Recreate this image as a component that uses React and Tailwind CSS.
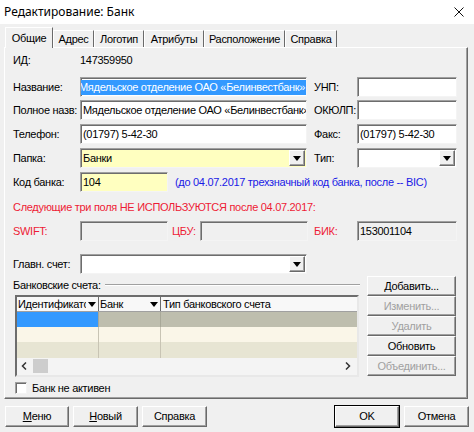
import React from 'react';

const sunken =
  'border border-t-[#a0a0a0] border-l-[#a0a0a0] border-r-[#f4f4f4] border-b-[#f4f4f4] shadow-[inset_1px_1px_0_#6d6d6d]';
const raised =
  'border border-t-white border-l-white border-r-[#6a6a6a] border-b-[#6a6a6a] shadow-[inset_-1px_-1px_0_#a0a0a0] bg-[#f0f0f0]';

const Field = ({ w, bg = 'bg-white', children, className = '' }) => (
  <div className={`${w} h-[20px] ${bg} ${sunken} flex items-center overflow-hidden whitespace-nowrap pl-[2px] ${className}`}>
    {children}
  </div>
);

const Arrow = () => (
  <svg width="8" height="5" viewBox="0 0 8 5">
    <path d="M0 0h8L4 5z" fill="#000" />
  </svg>
);

const Combo = ({ w, bg = 'bg-white', children }) => (
  <div className={`${w} h-[20px] ${bg} ${sunken} flex items-center overflow-hidden whitespace-nowrap pl-[2px] pr-[1px]`}>
    <span className="flex-1">{children}</span>
    <div className={`w-[16px] h-[16px] ${raised} flex items-center justify-center`}>
      <Arrow />
    </div>
  </div>
);

const Btn = ({ w = 'w-[89px]', children, disabled, def, className = '' }) => (
  <div
    className={`${w} h-[20px] ${raised} flex items-center justify-center whitespace-nowrap ${
      disabled ? 'text-[#a0a0a0]' : 'text-black'
    } ${def ? 'outline outline-1 outline-black' : ''} ${className}`}
  >
    {children}
  </div>
);

const Tab = ({ w, active, children }) => (
  <div
    className={`${w} flex items-center justify-center whitespace-nowrap border-l border-t border-l-white border-t-white border-r border-r-[#6a6a6a] ${
      active ? 'h-[21px] relative z-10 bg-[#f0f0f0] -mb-[1px]' : 'h-[17px]'
    }`}
  >
    {children}
  </div>
);

const Label = ({ w = 'w-[67px]', className = '', children }) => (
  <span className={`${w} shrink-0 whitespace-nowrap ${className}`}>{children}</span>
);

export default function App() {
  return (
    <div
      className="w-[474px] h-[432px] bg-[#f0f0f0] overflow-hidden text-[11px] tracking-[-0.3px] text-black leading-none"
      style={{ fontFamily: '"Liberation Sans", Arial, sans-serif' }}
    >
      {/* title bar */}
      <div className="h-[24px] bg-white flex items-center justify-between pl-[4px] pr-[10px] tracking-normal">
        <span className="text-[12px]" style={{ fontFamily: '"Noto Sans", "Open Sans", sans-serif' }}>
          Редактирование: Банк
        </span>
        <svg width="10" height="10" viewBox="0 0 10 10">
          <path d="M0.5 0.5L9.5 9.5M9.5 0.5L0.5 9.5" stroke="#111" strokeWidth="1" />
        </svg>
      </div>

      {/* tabs */}
      <div className="flex items-end pl-[5px] mt-[3px] h-[20px]">
        <Tab w="w-[48px]" active>Общие</Tab>
        <Tab w="w-[41px]">Адрес</Tab>
        <Tab w="w-[50px]">Логотип</Tab>
        <Tab w="w-[60px]">Атрибуты</Tab>
        <Tab w="w-[81px]">Расположение</Tab>
        <Tab w="w-[52px]">Справка</Tab>
      </div>

      {/* panel */}
      <div className="ml-[4px] w-[464px] h-[352px] border border-t-white border-l-white border-r-[#6a6a6a] border-b-[#6a6a6a] shadow-[inset_-1px_-1px_0_#a0a0a0] pl-[8px] flex flex-col">
        <div className="flex items-center h-[20px] mt-[2px]">
          <Label>ИД:</Label>
          <span>147359950</span>
        </div>

        <div className="flex items-center h-[20px] mt-[7px]">
          <Label>Название:</Label>
          <Field w="w-[227px]" className="!pl-[1px]">
            <span className="bg-[#3399ff] text-white h-[15px] flex items-center pr-[4px] -ml-[3px]">
              Мядельское отделение ОАО «Белинвестбанк»
            </span>
          </Field>
          <Label w="w-[43px]" className="ml-[7px]">УНП:</Label>
          <Field w="w-[100px]" />
        </div>

        <div className="flex items-center h-[20px] mt-[3px]">
          <Label>Полное назв:</Label>
          <Field w="w-[227px]">Мядельское отделение ОАО «Белинвестбанк»</Field>
          <Label w="w-[43px]" className="ml-[7px]">ОКЮЛП:</Label>
          <Field w="w-[100px]" />
        </div>

        <div className="flex items-center h-[20px] mt-[4px]">
          <Label>Телефон:</Label>
          <Field w="w-[227px]">(01797) 5-42-30</Field>
          <Label w="w-[43px]" className="ml-[7px]">Факс:</Label>
          <Field w="w-[100px]">(01797) 5-42-30</Field>
        </div>

        <div className="flex items-center h-[20px] mt-[4px]">
          <Label>Папка:</Label>
          <Combo w="w-[227px]" bg="bg-[#ffffc0]">Банки</Combo>
          <Label w="w-[43px]" className="ml-[7px]">Тип:</Label>
          <Combo w="w-[100px]" />
        </div>

        <div className="flex items-center h-[20px] mt-[4px]">
          <Label>Код банка:</Label>
          <Field w="w-[88px]" bg="bg-[#ffffc0]">104</Field>
          <span className="ml-[7px] text-[#1a1ae6] whitespace-nowrap">
            (до 04.07.2017 трехзначный код банка, после -- BIC)
          </span>
        </div>

        <div className="flex items-center h-[18px] mt-[6px] text-[#ee1b35] whitespace-nowrap">
          Следующие три поля НЕ ИСПОЛЬЗУЮТСЯ после 04.07.2017:
        </div>

        <div className="flex items-center h-[20px] mt-[5px]">
          <Label className="text-[#ee1b35]">SWIFT:</Label>
          <Field w="w-[88px]" bg="bg-[#f0f0f0]" />
          <Label w="w-[28px]" className="ml-[4px] text-[#ee1b35]">ЦБУ:</Label>
          <Field w="w-[108px]" bg="bg-[#f0f0f0]" />
          <Label w="w-[43px]" className="ml-[6px] text-[#ee1b35]">БИК:</Label>
          <Field w="w-[100px]" bg="bg-[#f0f0f0]">153001104</Field>
        </div>

        <div className="flex items-center h-[20px] mt-[13px]">
          <Label>Главн. счет:</Label>
          <Combo w="w-[227px]" />
        </div>

        {/* accounts group */}
        <div className="flex mt-[2px]">
          <div className="w-[346px] flex flex-col">
            <div className="flex items-center h-[14px] mt-[2px]">
              <span className="shrink-0 pr-[4px]">Банковские счета:</span>
              <div className="flex-1 border-t border-t-[#a0a0a0] border-b border-b-white mr-[-1px]" />
            </div>
            <div className="ml-[2px] mt-[3px] w-[344px] h-[82px] border-2 border-t-[#6d6d6d] border-l-[#6d6d6d] border-r-[#e8e8e8] border-b-[#e8e8e8] bg-[#f4f4f4] flex flex-col">
              <div className="flex h-[15px] bg-[#f8f8f8] border-b border-b-[#a0a0a0]">
                <div className="w-[82px] flex items-center pl-[1px] border-r border-r-[#6d6d6d] overflow-hidden whitespace-nowrap">
                  <span className="flex-1 overflow-hidden">Идентификатор</span>
                  <span className="px-[2px]"><Arrow /></span>
                </div>
                <div className="w-[62px] flex items-center pl-[1px] border-r border-r-[#6d6d6d]">
                  <span className="flex-1">Банк</span>
                  <span className="px-[2px]"><Arrow /></span>
                </div>
                <div className="flex-1 flex items-center pl-[2px] whitespace-nowrap">Тип банковского счета</div>
              </div>
              <div className="flex h-[15px] bg-[#bebeae]">
                <div className="w-[82px] bg-[#3399ff] border-r border-r-[#a8a898]" />
                <div className="w-[62px] border-r border-r-[#a8a898]" />
              </div>
              <div className="flex h-[15px] bg-[#faf6e8]">
                <div className="w-[82px] border-r border-r-[#c8c4b4]" />
                <div className="w-[62px] border-r border-r-[#c8c4b4]" />
              </div>
              <div className="flex h-[16px] bg-[#e7e5d3]">
                <div className="w-[82px] border-r border-r-[#c8c4b4]" />
                <div className="w-[62px] border-r border-r-[#c8c4b4]" />
              </div>
              <div className="flex items-center h-[16px] bg-[#f4f4f4] pl-[4px] pr-[6px]">
                <svg width="6" height="8" viewBox="0 0 6 8"><path d="M5 0.5L1.5 4L5 7.5" stroke="#333" strokeWidth="1.5" fill="none" /></svg>
                <div className="ml-[6px] w-[15px] h-[14px] bg-[#cdcdcd]" />
                <div className="flex-1" />
                <svg width="6" height="8" viewBox="0 0 6 8"><path d="M1 0.5L4.5 4L1 7.5" stroke="#333" strokeWidth="1.5" fill="none" /></svg>
              </div>
            </div>
          </div>
          <div className="ml-[8px] flex flex-col">
            <Btn>Добавить...</Btn>
            <Btn disabled>Изменить...</Btn>
            <Btn disabled>Удалить</Btn>
            <Btn>Обновить</Btn>
            <Btn disabled>Объединить...</Btn>
          </div>
        </div>

        <div className="flex items-center h-[14px] mt-[4px] ml-[2px]">
          <div className={`w-[12px] h-[12px] bg-white ${sunken}`} />
          <span className="ml-[5px]">Банк не активен</span>
        </div>
      </div>

      {/* bottom buttons */}
      <div className="flex items-center mt-[7px] px-[5px]">
        <Btn w="w-[64px]" className="!h-[21px]"><span><span className="underline">М</span>еню</span></Btn>
        <Btn w="w-[65px]" className="!h-[21px] ml-[4px]"><span><span className="underline">Н</span>овый</span></Btn>
        <Btn w="w-[65px]" className="!h-[21px] ml-[4px]">Справка</Btn>
        <div className="flex-1" />
        <Btn w="w-[64px]" className="!h-[21px]" def>OK</Btn>
        <Btn w="w-[65px]" className="!h-[21px] ml-[5px]">Отмена</Btn>
      </div>
    </div>
  );
}
